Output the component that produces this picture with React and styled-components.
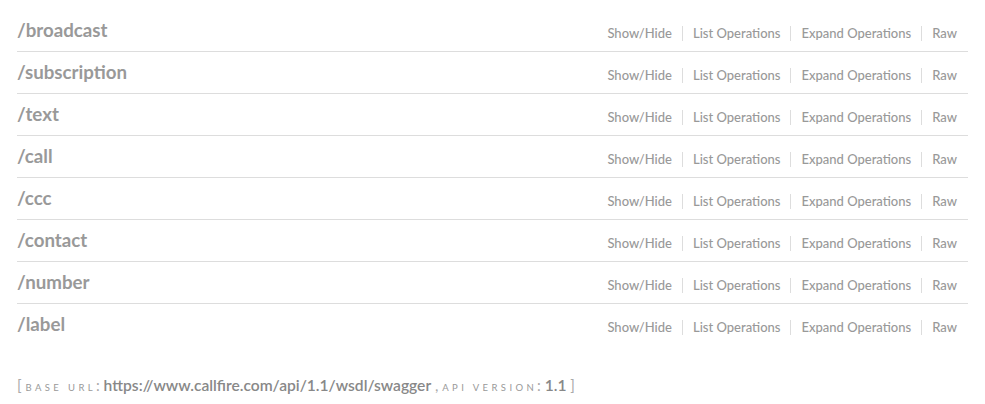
import React from 'react'
import styled, {createGlobalStyle} from 'styled-components'

const resources = ['broadcast', 'subscription', 'text', 'call', 'ccc', 'contact', 'number', 'label']
const actions = ['Show/Hide', 'List Operations', 'Expand Operations', 'Raw']

export default function App() {
  return (
    <Page>
      <GlobalStyle />
      <ResourceList>
        {resources.map(name => (
          <Resource key={name}>
            <Heading href='#'>/{name}</Heading>
            <Actions>
              {actions.map(action => (
                <Action key={action}>
                  <a href='#'>{action}</a>
                </Action>
              ))}
            </Actions>
          </Resource>
        ))}
      </ResourceList>
      <Footer>
        [ <Label>Base url</Label>: <Value>https://www.callfire.com/api/1.1/wsdl/swagger</Value> ,{' '}
        <Label>Api version</Label>: <Value>1.1</Value> ]
      </Footer>
    </Page>
  )
}

const GlobalStyle = createGlobalStyle`
  html, body {
    margin: 0;
    padding: 0;
    background: #fff;
  }
  body {
    font-family: Lato, "Open Sans", sans-serif;
  }
  a {
    text-decoration: none;
  }
  `

const Page = styled('div')`
  width: 951px;
  padding: 10px 0 0 17px;
  `

const ResourceList = styled('ul')`
  list-style: none;
  margin: 0;
  padding: 0;
  `

const Resource = styled('li')`
  display: flex;
  justify-content: space-between;
  align-items: center;
  height: 41px;
  border-bottom: 1px solid #ddd;
  &:last-child {
    border-bottom: none;
  }
  `

const Heading = styled('a')`
  font-size: 18.7px;
  font-weight: 700;
  color: #999;
  margin-top: -2px;
  `

const Actions = styled('ul')`
  display: flex;
  list-style: none;
  margin: 6px 0 0;
  padding: 0;
  `

const Action = styled('li')`
  padding: 0 10px;
  line-height: 15px;
  border-right: 1px solid #ddd;
  font-size: 13px;
  &:first-child {
    padding-left: 0;
  }
  &:last-child {
    border-right: none;
    padding-right: 11px;
  }
  & a {
    color: #999;
    font-weight: 500;
  }
  `

const Footer = styled('div')`
  margin-top: 31px;
  font-size: 15px;
  color: #aaa;
  `

const Label = styled('span')`
  font-size: 9.5px;
  text-transform: uppercase;
  letter-spacing: 3.4px;
  color: #999;
  `

const Value = styled('span')`
  font-size: 15.6px;
  font-weight: 600;
  color: #888;
  `
